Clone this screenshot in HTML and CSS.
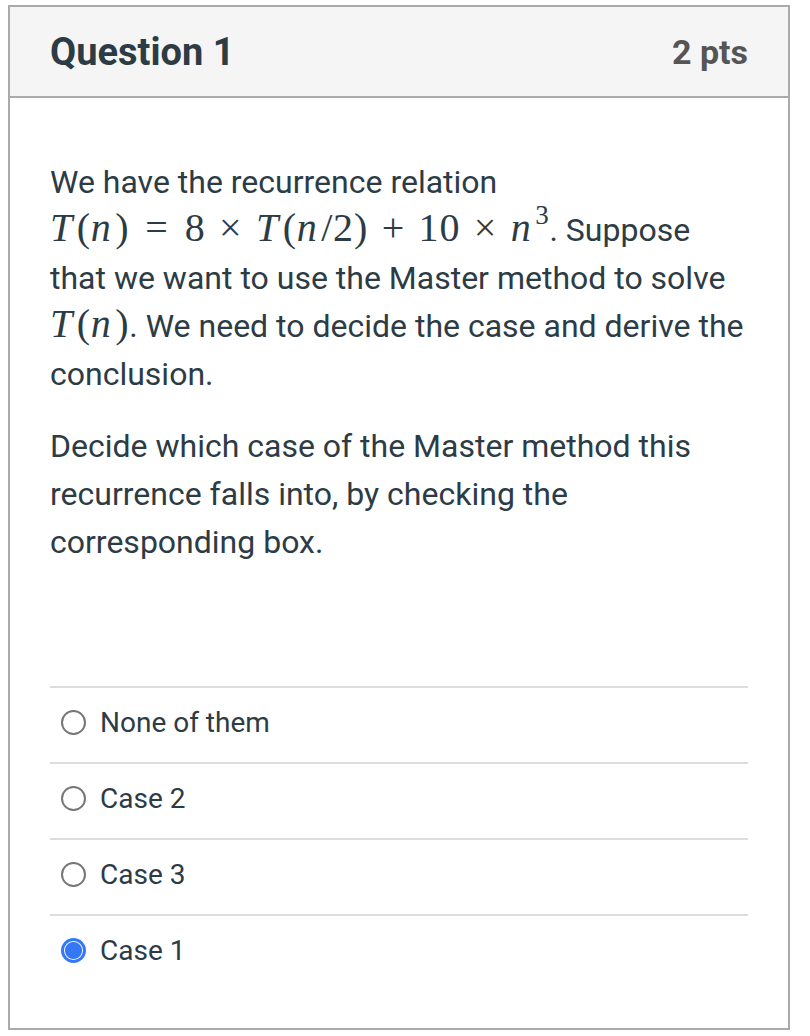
FILE: index.html
```html
<!DOCTYPE html>
<html lang="en">
<head>
    <meta charset="UTF-8">
    <meta name="viewport" content="width=device-width, initial-scale=1.0">
    <title>Question 1</title>
    <link rel="stylesheet" href="styles.css">
</head>
<body>
    <div class="question">
        <div class="header">
            <h2 class="title">Question 1</h2>
            <div class="points">2 pts</div>
        </div>

        <div class="content">
            <div class="text">
                <p>We have the recurrence relation
                    <span class="math"><i>T</i>(<i>n</i>)<span class="rel">=</span>8<span class="bin">×</span><i>T</i>(<i>n</i>/2)<span class="bin">+</span>10<span class="bin">×</span><i>n</i><sup>3</sup></span>. Suppose
                    that we want to use the Master method to solve
                    <span class="math"><i>T</i>(<i>n</i>)</span>. We need to decide the case and derive the conclusion.</p>
                <p>Decide which case of the Master method this recurrence falls into, by checking the corresponding box.</p>
            </div>

            <div class="answers">
                <label class="answer">
                    <span class="radio"></span>
                    None of them
                </label>
                <label class="answer">
                    <span class="radio"></span>
                    Case 2
                </label>
                <label class="answer">
                    <span class="radio"></span>
                    Case 3
                </label>
                <label class="answer">
                    <span class="radio checked"></span>
                    Case 1
                </label>
            </div>
        </div>
    </div>
</body>
</html>
```

FILE: styles.css
```css
body {
    font-family: Roboto, 'Liberation Sans', sans-serif;
    color: #2d3b45;
    background: white;
    margin: 0;
    padding: 5px 20px 5px 8px;
}
.question {
    border: 2px solid #aaaaaa;
    width: 778px;
}
.header {
    background: #f5f5f5;
    border-bottom: 2px solid #aaaaaa;
    height: 89px;
    padding: 0 40px;
    display: flex;
    align-items: center;
    justify-content: space-between;
}
.title {
    margin: 0;
    font-size: 38px;
    font-weight: 700;
    color: #2d3b45;
}
.points {
    font-size: 34px;
    font-weight: 700;
    color: #555555;
}
.content {
    padding: 60px 40px 38px;
}
.text p {
    margin: 0 0 24px;
    font-size: 32px;
    line-height: 48px;
}
.math {
    font-family: 'Liberation Serif', 'DejaVu Serif', serif;
    font-size: 40px;
    line-height: 1;
    letter-spacing: 0.02em;
    white-space: nowrap;
}
.math i {
    margin-right: 0.09em;
}
.math sup {
    font-size: 27px;
    line-height: 0;
    vertical-align: 17px;
}
.rel {
    margin: 0 0.4em;
}
.bin {
    margin: 0 0.34em;
}
.answers {
    margin-top: 120px;
}
.answer {
    display: flex;
    align-items: center;
    gap: 14px;
    height: 68px;
    padding: 0 0 6px 11px;
    border-top: 2px solid #dcdcdc;
    font-size: 28px;
}
.radio {
    width: 21px;
    height: 21px;
    border: 2px solid #767676;
    border-radius: 50%;
    box-sizing: content-box;
}
.radio.checked {
    width: 19px;
    height: 19px;
    border: 3px solid #3478f6;
    background: radial-gradient(circle, #3478f6 0 8px, white 9px);
}
```
